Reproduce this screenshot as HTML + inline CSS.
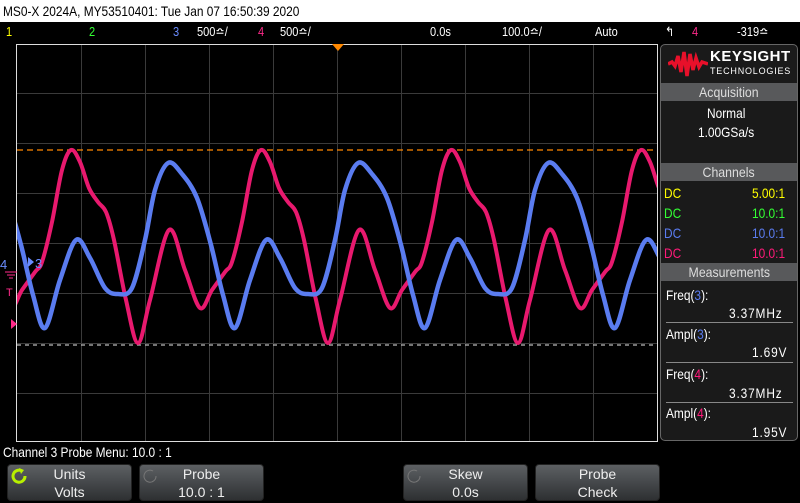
<!DOCTYPE html>
<html><head><meta charset="utf-8"><style>
*{margin:0;padding:0;box-sizing:border-box}
body{width:800px;height:503px;background:#000;position:relative;overflow:hidden;font-family:"Liberation Sans",sans-serif;color:#fff}
.t{position:absolute;white-space:nowrap;font-size:13px;transform-origin:0 0;transform:scaleX(0.85);line-height:1}
#hdr{position:absolute;left:0;top:0;width:800px;height:22px;background:#fff}
.panel{position:absolute;left:660px;top:44px;width:138px;height:397px;border:1px solid #666;border-radius:5px;background:#1a1a1a}
.ph{position:absolute;left:661px;width:136px;height:18px;background:#58595b;text-align:center;font-size:14px;color:#ddd;line-height:18px}
.ph span{display:inline-block;transform:scaleX(0.88)}
.sep{position:absolute;left:666px;width:127px;height:1px;background:#888}
.btn{position:absolute;top:464px;width:125px;height:37px;border-radius:4px;background:linear-gradient(#5d6063,#45484b 50%,#2e3032);border:1px solid #222;text-align:center;font-size:14px;color:#eee}
.btn div{height:18px;line-height:18px}
</style></head><body>
<div id="hdr"></div>
<div class="t" style="left:3px;top:4px;color:#000;font-size:14px">MS0-X 2024A, MY53510401: Tue Jan 07 16:50:39 2020</div>
<div class="t" style="left:6px;top:25px;color:#ff0">1</div>
<div class="t" style="left:89px;top:25px;color:#3f3">2</div>
<div class="t" style="left:173px;top:25px;color:#6a8cff">3</div>
<div class="t" style="left:197px;top:25px">500&#8783;/</div>
<div class="t" style="left:258px;top:25px;color:#ff2a8a">4</div>
<div class="t" style="left:280px;top:25px">500&#8783;/</div>
<div class="t" style="left:430px;top:25px">0.0s</div>
<div class="t" style="left:502px;top:25px">100.0&#8783;/</div>
<div class="t" style="left:595px;top:25px">Auto</div>
<div class="t" style="left:665px;top:25px">&#8624;</div>
<div class="t" style="left:692px;top:25px;color:#ff2a8a">4</div>
<div class="t" style="left:737px;top:25px">-319&#8783;</div>

<svg style="position:absolute;left:0;top:0" width="800" height="503">
<defs><clipPath id="c"><rect x="17" y="44" width="640" height="398"/></clipPath></defs>
<g stroke="#3a3a3a" stroke-width="1">
<path d="M81.5 44V442M145.5 44V442M209.5 44V442M273.5 44V442M337.5 44V442M401.5 44V442M465.5 44V442M529.5 44V442M593.5 44V442"/>
<path d="M17 93.5H657M17 143.5H657M17 193.5H657M17 243.5H657M17 293.5H657M17 343.5H657M17 393.5H657"/>
</g>
<rect x="16.5" y="44.5" width="641" height="397" fill="none" stroke="#ddd" stroke-width="1"/>
<path d="M17 150H657" stroke="#f80" stroke-width="1.3" stroke-dasharray="6,4"/>
<path d="M17 345H657" stroke="#bbb" stroke-width="1.3" stroke-dasharray="4,4"/>
<path d="M332 44h12l-6 7z" fill="#f80"/>
<g clip-path="url(#c)" fill="none" stroke-linejoin="round" stroke-linecap="round">
<path id="p4" stroke="#e8196e" stroke-width="4"/>
<path id="p3" stroke="#5a7cf0" stroke-width="4.5"/>
</g>
<text x="0" y="269" fill="#6a8cff" font-size="13" font-family="Liberation Sans">4</text>
<path d="M28 257l6 5-6 5z" fill="#6a8cff"/>
<text x="35" y="268" fill="#6a8cff" font-size="13" font-family="Liberation Sans">3</text>
<path d="M5 272h12M7 275h8M9 278h4" stroke="#ff2a8a"/>
<text x="6" y="296" fill="#ff2a8a" font-size="11" font-family="Liberation Sans">T</text>
<path d="M11 319l6 5-6 5z" fill="#ff2a8a"/>
</svg>

<div class="panel"></div>
<svg style="position:absolute;left:668px;top:50px" width="40" height="28" viewBox="0 0 40 28">
<path d="M0 14 L4 12 L7 16 L10 6 L13 22 L16 2 L19 26 L22 4 L25 20 L28 8 L31 17 L34 12 L40 14" fill="none" stroke="#e8102a" stroke-width="3.5"/>
</svg>
<div style="position:absolute;left:710px;top:48px;font-size:15px;font-weight:bold;letter-spacing:0.5px">KEYSIGHT</div>
<div style="position:absolute;left:710px;top:66px;font-size:9px;letter-spacing:0.8px">TECHNOLOGIES</div>
<div class="ph" style="top:83px"><span>Acquisition</span></div>
<div class="t" style="left:707px;top:106px;font-size:14px">Normal</div>
<div class="t" style="left:698px;top:125px;font-size:14px">1.00GSa/s</div>
<div class="ph" style="top:163px"><span>Channels</span></div>
<div class="t" style="left:664px;top:186px;color:#ff0;font-size:14px">DC</div><div class="t" style="left:752px;top:186px;color:#ff0;font-size:14px">5.00:1</div>
<div class="t" style="left:664px;top:206px;color:#3f3;font-size:14px">DC</div><div class="t" style="left:752px;top:206px;color:#3f3;font-size:14px">10.0:1</div>
<div class="t" style="left:664px;top:226px;color:#5a7cf0;font-size:14px">DC</div><div class="t" style="left:752px;top:226px;color:#5a7cf0;font-size:14px">10.0:1</div>
<div class="t" style="left:664px;top:246px;color:#ff1a7a;font-size:14px">DC</div><div class="t" style="left:752px;top:246px;color:#ff1a7a;font-size:14px">10.0:1</div>
<div class="ph" style="top:263px"><span>Measurements</span></div>
<div class="t" style="left:666px;top:288px;font-size:14px">Freq(<span style="color:#5a7cf0">3</span>):</div>
<div class="t" style="left:729px;top:306px;font-size:14px;letter-spacing:1px">3.37MHz</div>
<div class="sep" style="top:322px"></div>
<div class="t" style="left:666px;top:327px;font-size:14px">Ampl(<span style="color:#5a7cf0">3</span>):</div>
<div class="t" style="left:752px;top:345px;font-size:14px;letter-spacing:1px">1.69V</div>
<div class="sep" style="top:362px"></div>
<div class="t" style="left:666px;top:367px;font-size:14px">Freq(<span style="color:#ff1a7a">4</span>):</div>
<div class="t" style="left:729px;top:386px;font-size:14px;letter-spacing:1px">3.37MHz</div>
<div class="sep" style="top:402px"></div>
<div class="t" style="left:666px;top:406px;font-size:14px">Ampl(<span style="color:#ff1a7a">4</span>):</div>
<div class="t" style="left:752px;top:425px;font-size:14px;letter-spacing:1px">1.95V</div>

<div class="t" style="left:3px;top:445px;font-size:14px">Channel 3 Probe Menu: 10.0 : 1</div>
<div class="btn" style="left:7px"><div>Units</div><div>Volts</div></div>
<div class="btn" style="left:139px"><div>Probe</div><div>10.0 : 1</div></div>
<div class="btn" style="left:403px"><div>Skew</div><div>0.0s</div></div>
<div class="btn" style="left:535px"><div>Probe</div><div>Check</div></div>
<svg style="position:absolute;left:11px;top:466px" width="20" height="20">
<path d="M14 10a6 6 0 1 1-3-5" fill="none" stroke="#b8f000" stroke-width="3"/><path d="M8 2l5 2-3 4z" fill="#b8f000"/>
</svg>
<svg style="position:absolute;left:142px;top:466px" width="20" height="20"><path d="M14 10a6 6 0 1 1-3-5" fill="none" stroke="#777" stroke-width="1"/></svg>
<svg style="position:absolute;left:406px;top:466px" width="20" height="20"><path d="M14 10a6 6 0 1 1-3-5" fill="none" stroke="#777" stroke-width="1"/></svg>
<script>
function build(pts,period){
 var all=[];
 for(var k=-2;k<5;k++){pts.forEach(function(p){all.push([p[0]+k*period,p[1]]);});}
 all.sort(function(a,b){return a[0]-b[0];});
 var u=[];all.forEach(function(p){if(!u.length||p[0]-u[u.length-1][0]>0.5)u.push(p);});
 var d="M"+u[0][0]+" "+u[0][1];
 for(var i=0;i<u.length-1;i++){
  var p0=u[Math.max(0,i-1)],p1=u[i],p2=u[i+1],p3=u[Math.min(u.length-1,i+2)];
  var c1x=p1[0]+(p2[0]-p0[0])/6,c1y=p1[1]+(p2[1]-p0[1])/6;
  var c2x=p2[0]-(p3[0]-p1[0])/6,c2y=p2[1]-(p3[1]-p1[1])/6;
  d+="C"+c1x.toFixed(1)+" "+c1y.toFixed(1)+" "+c2x.toFixed(1)+" "+c2y.toFixed(1)+" "+p2[0]+" "+p2[1];
 }
 return d;
}
var P=190;
var pink=[[71,150],[80,162],[89,188],[98,202],[106,212],[114,240],[126,300],[138,343],[150,300],[169,230],[185,270],[200,308],[212,290],[225,272],[232,262],[242,222],[252,170]];
var blue=[[45,328],[60,280],[76,240],[90,258],[105,288],[118,294],[132,288],[145,240],[155,190],[168,163],[182,174],[197,198],[211,245],[223,295]];
document.getElementById('p4').setAttribute('d',build(pink,P));
document.getElementById('p3').setAttribute('d',build(blue,P));
</script>
</body></html>
